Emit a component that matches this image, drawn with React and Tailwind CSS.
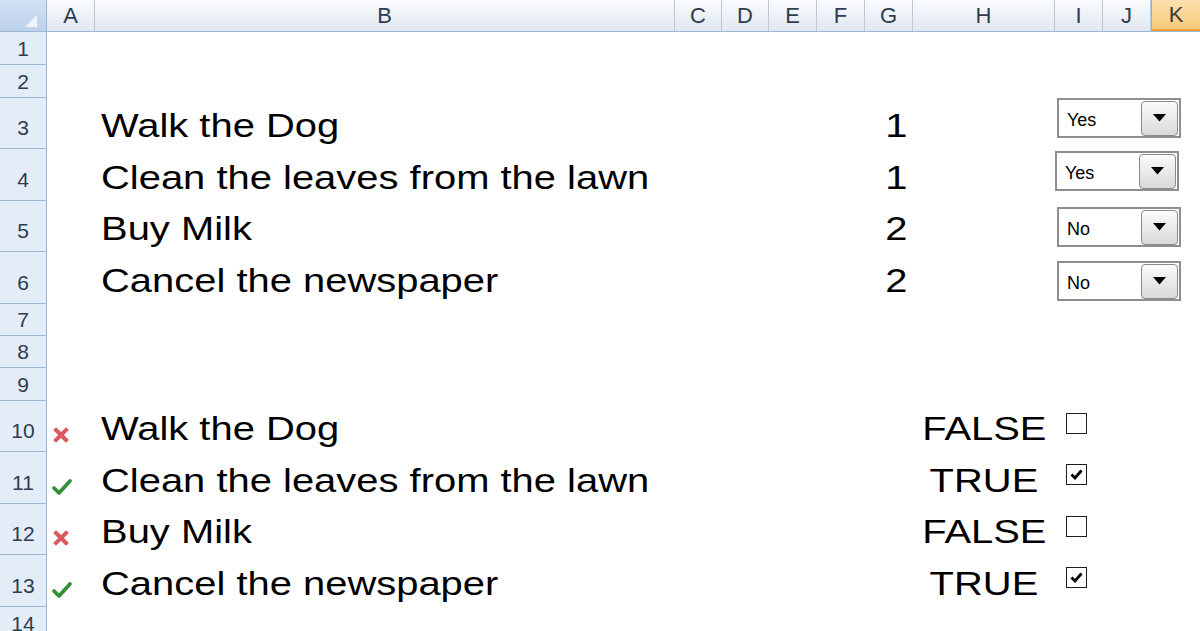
import React from "react";

const GRID =
  "grid grid-cols-[47px_48px_580px_47px_47px_48px_48px_48px_142px_48px_48px_49px]";

const cols = ["A", "B", "C", "D", "E", "F", "G", "H", "I", "J", "K"];

function RedX() {
  return (
    <svg width="16" height="16" viewBox="0 0 16 16">
      <path d="M3 3 L13 13 M13 3 L3 13" stroke="#db5a5e" strokeWidth="4" strokeLinecap="square" fill="none" />
    </svg>
  );
}

function GreenCheck() {
  return (
    <svg width="22" height="18" viewBox="0 0 22 18">
      <path d="M3 10 L8 15 L19 3" stroke="#378f37" strokeWidth="3.8" strokeLinecap="round" strokeLinejoin="round" fill="none" />
    </svg>
  );
}

function Header() {
  return (
    <div className={`${GRID} h-[32px] border-b border-[#9eb6ce]`}>
      <div className="relative bg-linear-to-b from-[#d3e1f3] to-[#bcd1ec] border-r border-[#9eb6ce]">
        <svg className="absolute left-0 top-0" width="47" height="31" viewBox="0 0 47 31">
          <polygon points="25,27 37,15 37,27" fill="#f1f5fb" />
        </svg>
      </div>
      {cols.map((c) => (
        <div
          key={c}
          className={
            c === "K"
              ? "flex items-center justify-center bg-linear-to-b from-[#fbe0ae] to-[#f6c979] border-l border-b-2 border-[#f0a036] text-[22px] leading-none text-[#3a3a3a]"
              : "flex items-center justify-center bg-linear-to-b from-[#fafbfd] to-[#e0e7f0] border-r border-[#b9c8d9] text-[22px] leading-none text-[#2e3c4f]"
          }
        >
          {c}
        </div>
      ))}
    </div>
  );
}

function RowHead({ n, big }) {
  return (
    <div
      className={
        big
          ? "flex items-end justify-center pb-[10px] bg-[#e4ecf7] border-r border-b border-[#9eb6ce] text-[21px] leading-none text-[#2e3c4f]"
          : "flex items-center justify-center bg-[#e4ecf7] border-r border-b border-[#9eb6ce] text-[21px] leading-none text-[#2e3c4f]"
      }
    >
      {n}
    </div>
  );
}

function Task({ text }) {
  return (
    <div className="col-start-3 row-start-1 flex items-center pl-[6px] pt-[4px] min-w-0">
      <span className="inline-block origin-left scale-x-[1.21] text-[33px] leading-none text-black whitespace-nowrap">
        {text}
      </span>
    </div>
  );
}

function Dropdown({ value, cls }) {
  return (
    <div className={`col-start-10 col-end-13 row-start-1 self-start ${cls}`}>
      <div className="flex h-[40px] w-[124px] items-center border-2 border-[#8e8e8e] bg-white">
        <span className="pl-[8px] pt-[4px] text-[18px] leading-none text-black">{value}</span>
        <div className="ml-auto mr-[1px] flex h-[35px] w-[37px] items-center justify-center rounded-[4px] border border-[#8a8a8a] bg-linear-to-b from-[#fbfbfb] to-[#d9d9d9]">
          <svg width="13" height="8" viewBox="0 0 13 8">
            <polygon points="0,0 13,0 6.5,7.5" fill="#000" />
          </svg>
        </div>
      </div>
    </div>
  );
}

function Checkbox({ checked }) {
  return (
    <div className="col-start-10 row-start-1 pt-[12px] pl-[11px]">
      <div className="flex h-[21px] w-[21px] items-center justify-center border-[1.5px] border-[#1e1e1e] bg-white">
        {checked && (
          <svg width="13" height="11" viewBox="0 0 13 11">
            <path d="M1.5 5.5 L5 9 L11.5 1.5" stroke="#000" strokeWidth="2.8" fill="none" />
          </svg>
        )}
      </div>
    </div>
  );
}

function EmptyRow({ n, h }) {
  return (
    <div className={`${GRID} ${h}`}>
      <RowHead n={n} />
    </div>
  );
}

export default function App() {
  const top = [
    { n: 3, h: "h-[51px]", t: "Walk the Dog", v: "1", dd: "Yes", ddc: "ml-[2px] mt-[0px]" },
    { n: 4, h: "h-[52px]", t: "Clean the leaves from the lawn", v: "1", dd: "Yes", ddc: "ml-[0px] mt-[2px]" },
    { n: 5, h: "h-[51px]", t: "Buy Milk", v: "2", dd: "No", ddc: "ml-[2px] mt-[6px]" },
    { n: 6, h: "h-[52px]", t: "Cancel the newspaper", v: "2", dd: "No", ddc: "ml-[2px] mt-[9px]" },
  ];
  const bottom = [
    { n: 10, h: "h-[51px]", t: "Walk the Dog", ok: false },
    { n: 11, h: "h-[52px]", t: "Clean the leaves from the lawn", ok: true },
    { n: 12, h: "h-[51px]", t: "Buy Milk", ok: false },
    { n: 13, h: "h-[52px]", t: "Cancel the newspaper", ok: true },
  ];
  return (
    <div className="h-[631px] w-[1200px] overflow-hidden bg-white font-['Liberation_Sans',Arial,sans-serif]">
      <Header />
      <EmptyRow n={1} h="h-[33px]" />
      <EmptyRow n={2} h="h-[33px]" />
      {top.map((r) => (
        <div key={r.n} className={`${GRID} ${r.h}`}>
          <RowHead n={r.n} big />
          <Task text={r.t} />
          <div className="col-start-8 row-start-1 flex items-center justify-end pr-[6px] pt-[4px]">
            <span className="inline-block origin-right scale-x-[1.21] text-[33px] leading-none text-black">
              {r.v}
            </span>
          </div>
          <Dropdown value={r.dd} cls={r.ddc} />
        </div>
      ))}
      <EmptyRow n={7} h="h-[32px]" />
      <EmptyRow n={8} h="h-[32px]" />
      <EmptyRow n={9} h="h-[33px]" />
      {bottom.map((r) => (
        <div key={r.n} className={`${GRID} ${r.h}`}>
          <RowHead n={r.n} big />
          <div className="col-start-2 row-start-1 flex items-end pb-[8px] pl-[4px]">
            {r.ok ? <GreenCheck /> : <span className="pl-[2px] pb-[1px]"><RedX /></span>}
          </div>
          <Task text={r.t} />
          <div className="col-start-9 row-start-1 flex items-center justify-center pt-[4px]">
            <span className="inline-block origin-center scale-x-[1.21] text-[33px] leading-none text-black">
              {r.ok ? "TRUE" : "FALSE"}
            </span>
          </div>
          <Checkbox checked={r.ok} />
        </div>
      ))}
      <EmptyRow n={14} h="h-[33px]" />
    </div>
  );
}
